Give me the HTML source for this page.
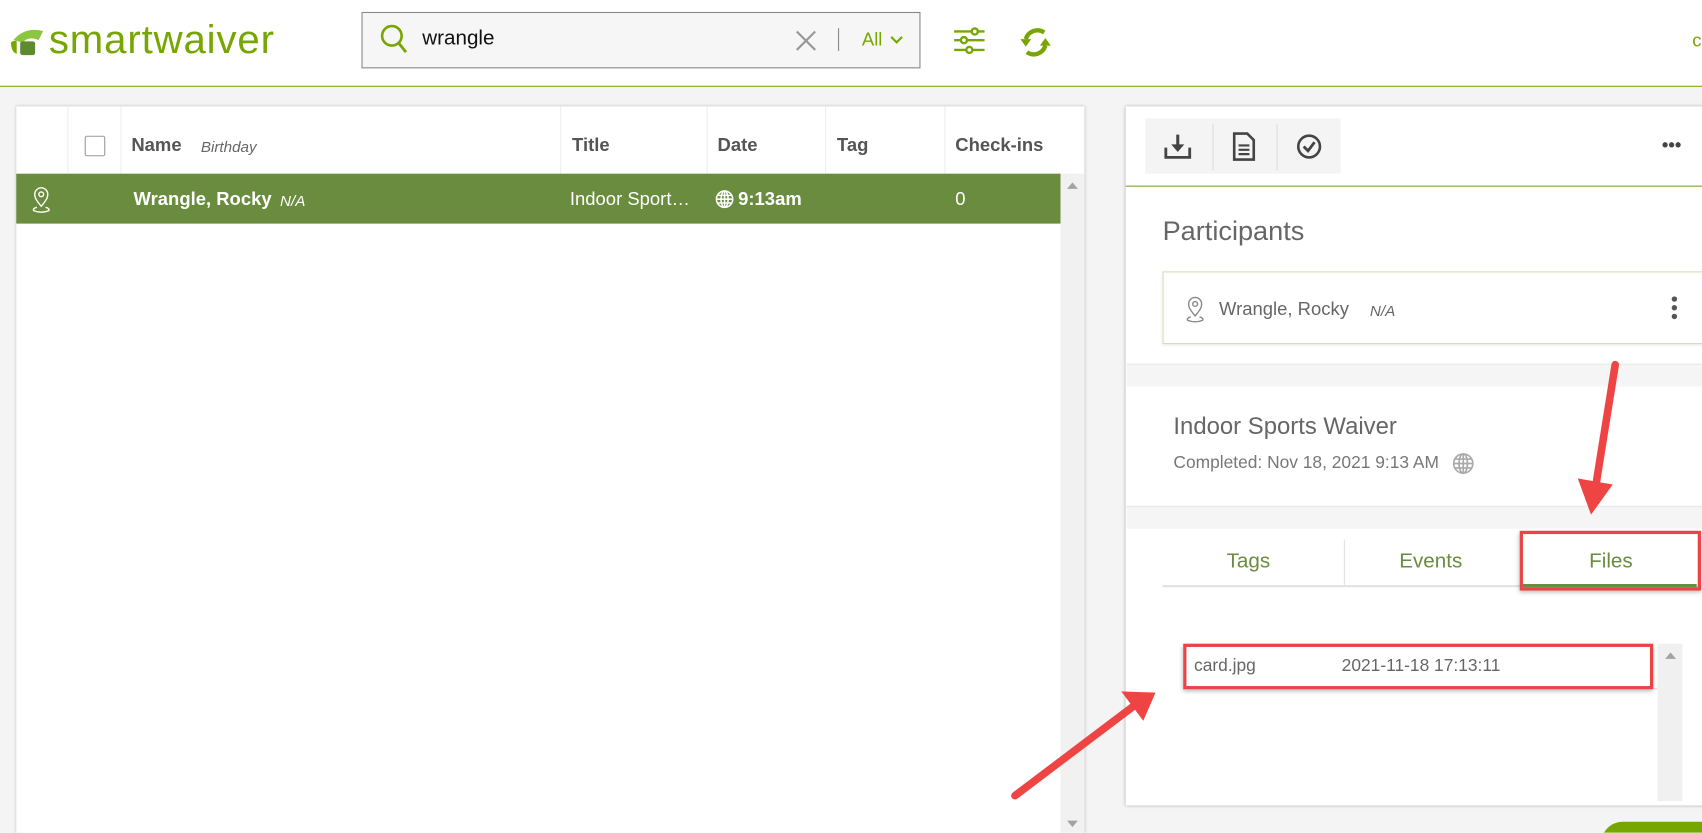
<!DOCTYPE html>
<html><head><meta charset="utf-8"><style>
html,body{margin:0;padding:0;width:1702px;height:832px;overflow:hidden;background:#f4f4f4;font-family:"Liberation Sans",sans-serif}
#s{position:absolute;left:0;top:0;width:1568px;height:767px;transform:scale(1.0855);transform-origin:0 0;background:#f4f4f4;overflow:hidden}
.a{position:absolute}
.hdr{left:0;top:0;width:1568px;height:79px;background:#fff;border-bottom:1px solid #7aa812}
.t{position:absolute;white-space:nowrap}
</style></head><body><div id="s">
<div class="a hdr"></div>
<!-- logo -->
<svg class="a" style="left:8px;top:22px" width="36" height="30" viewBox="0 0 34 28"><path d="M4 14 Q14 2 30 6 L26 14 Q18 10 12 16 Z" fill="#8cc63f"/><path d="M2 16 Q4 14 7 15 L7 26 Q2 24 2 16Z" fill="#77a600"/><rect x="10" y="15" width="13" height="12" rx="2" fill="#5d8a2f"/></svg>
<div class="t" style="left:45px;top:16px;font-size:37px;color:#77a600;letter-spacing:0.8px">smartwaiver</div>
<!-- search -->
<div class="a" style="left:333px;top:11px;width:513px;height:50px;background:#f6f6f6;border:1px solid #888"></div>
<svg class="a" style="left:348px;top:21px" width="32" height="32" viewBox="0 0 32 32"><circle cx="13" cy="12" r="9" fill="none" stroke="#77a600" stroke-width="2.4"/><line x1="19.5" y1="19" x2="26" y2="27" stroke="#77a600" stroke-width="2.6"/></svg>
<div class="t" style="left:389px;top:25px;font-size:19px;color:#111">wrangle</div>
<svg class="a" style="left:732px;top:27px" width="21" height="21"><path d="M2 2L19 19M19 2L2 19" stroke="#999" stroke-width="2"/></svg>
<div class="a" style="left:772px;top:26px;width:1px;height:21px;background:#888"></div>
<div class="t" style="left:794px;top:27px;font-size:17px;color:#77a600">All</div>
<svg class="a" style="left:820px;top:32px" width="12" height="10"><path d="M1 2L6 7L11 2" stroke="#77a600" stroke-width="2" fill="none"/></svg>
<svg class="a" style="left:878px;top:24px" width="30" height="28" viewBox="0 0 30 28"><g stroke="#77a600" stroke-width="2.2" fill="#fff"><line x1="1" y1="5" x2="29" y2="5"/><line x1="1" y1="13" x2="29" y2="13"/><line x1="1" y1="22" x2="29" y2="22"/><circle cx="20" cy="5" r="2.8"/><circle cx="10" cy="13" r="2.8"/><circle cx="15" cy="22" r="2.8"/></g></svg>
<svg class="a" style="left:937px;top:22px" width="34" height="34" viewBox="0 0 34 34"><path d="M25 8 A11 11 0 0 0 8 14" stroke="#77a600" stroke-width="4" fill="none"/><path d="M9 26 A11 11 0 0 0 26 20" stroke="#77a600" stroke-width="4" fill="none"/><path d="M3 14 L13 14 L8 21Z" fill="#77a600"/><path d="M21 20 L31 20 L26 13Z" fill="#77a600"/></svg>
<div class="t" style="left:1559px;top:28px;font-size:17px;color:#77a600">c</div>

<!-- left panel -->
<div class="a" style="left:15px;top:98px;width:984px;height:680px;background:#fff;box-shadow:0 0 3px rgba(0,0,0,.25)"></div>
<div class="a" style="left:62px;top:98px;width:1px;height:62px;background:#eee"></div>
<div class="a" style="left:111px;top:98px;width:1px;height:62px;background:#eee"></div>
<div class="a" style="left:516px;top:98px;width:1px;height:62px;background:#eee"></div>
<div class="a" style="left:651px;top:98px;width:1px;height:62px;background:#eee"></div>
<div class="a" style="left:760px;top:98px;width:1px;height:62px;background:#eee"></div>
<div class="a" style="left:870px;top:98px;width:1px;height:62px;background:#eee"></div>
<div class="a" style="left:78px;top:125px;width:17px;height:17px;border:1.5px solid #999;border-radius:2px"></div>
<div class="t" style="left:121px;top:124px;font-size:17px;font-weight:bold;color:#555">Name</div>
<div class="t" style="left:185px;top:127px;font-size:14px;font-style:italic;color:#666">Birthday</div>
<div class="t" style="left:527px;top:124px;font-size:17px;font-weight:bold;color:#555">Title</div>
<div class="t" style="left:661px;top:124px;font-size:17px;font-weight:bold;color:#555">Date</div>
<div class="t" style="left:771px;top:124px;font-size:17px;font-weight:bold;color:#555">Tag</div>
<div class="t" style="left:880px;top:124px;font-size:17px;font-weight:bold;color:#555">Check-ins</div>
<div class="a" style="left:15px;top:160px;width:962px;height:46px;background:#6a8c3f"></div>
<svg class="a" style="left:28px;top:171px" width="20" height="26" viewBox="0 0 20 26"><path d="M10 19 C4 12 4 10 4 8 A6 6 0 0 1 16 8 C16 10 16 12 10 19Z" fill="none" stroke="#fff" stroke-width="1.3"/><circle cx="10" cy="8" r="2.2" fill="none" stroke="#fff" stroke-width="1.3"/><path d="M6 20 Q2 21 3 23 Q10 26 17 23 Q18 21 14 20" fill="none" stroke="#fff" stroke-width="1.3"/></svg>
<div class="t" style="left:123px;top:174px;font-size:17px;font-weight:bold;color:#fff">Wrangle, Rocky</div>
<div class="t" style="left:258px;top:177px;font-size:14px;font-style:italic;color:#fff">N/A</div>
<div class="t" style="left:525px;top:174px;font-size:17px;color:#fff">Indoor Sport…</div>
<svg class="a" style="left:659px;top:175px" width="17" height="17" viewBox="0 0 17 17"><g fill="none" stroke="#fff" stroke-width="1.4"><circle cx="8.5" cy="8.5" r="7.5"/><ellipse cx="8.5" cy="8.5" rx="3.3" ry="7.5"/><line x1="1" y1="8.5" x2="16" y2="8.5"/><line x1="2" y1="5" x2="15" y2="5"/><line x1="2" y1="12" x2="15" y2="12"/><line x1="8.5" y1="1" x2="8.5" y2="16"/></g></svg>
<div class="t" style="left:680px;top:174px;font-size:17px;font-weight:bold;color:#fff">9:13am</div>
<div class="t" style="left:880px;top:174px;font-size:17px;color:#fff">0</div>
<div class="a" style="left:977px;top:160px;width:22px;height:610px;background:#f1f1f1"></div>
<svg class="a" style="left:982px;top:167px" width="12" height="8"><path d="M1 7L6 1L11 7Z" fill="#a3a3a3"/></svg>
<svg class="a" style="left:982px;top:755px" width="12" height="8"><path d="M1 1L6 7L11 1Z" fill="#a3a3a3"/></svg>

<!-- right panel -->
<div class="a" style="left:1037px;top:98px;width:540px;height:644px;background:#fff;box-shadow:0 0 3px rgba(0,0,0,.3)"></div>
<div class="a" style="left:1055px;top:109px;width:180px;height:51px;background:#f4f4f4"></div>
<div class="a" style="left:1117px;top:114px;width:1px;height:43px;background:#ddd"></div>
<div class="a" style="left:1176px;top:114px;width:1px;height:43px;background:#ddd"></div>
<svg class="a" style="left:1072px;top:122px" width="26" height="26" viewBox="0 0 26 26"><path d="M2 14 V23 H24 V14" fill="none" stroke="#444" stroke-width="2.6"/><line x1="13" y1="2" x2="13" y2="14" stroke="#444" stroke-width="2.8"/><path d="M7 11 L13 18 L19 11Z" fill="#444"/></svg>
<svg class="a" style="left:1135px;top:121px" width="22" height="28" viewBox="0 0 22 28"><path d="M2 2 H14 L20 8 V26 H2Z" fill="none" stroke="#444" stroke-width="2.4"/><path d="M6 13H16M6 17H16M6 21H16" stroke="#444" stroke-width="2"/></svg>
<svg class="a" style="left:1194px;top:123px" width="24" height="24" viewBox="0 0 24 24"><circle cx="12" cy="12" r="10" fill="none" stroke="#444" stroke-width="2.4"/><path d="M7 12 L11 16 L17 8" fill="none" stroke="#444" stroke-width="2.6"/></svg>
<div class="t" style="left:1531px;top:124px;font-size:17px;font-weight:bold;color:#444;letter-spacing:0px">•••</div>
<div class="a" style="left:1037px;top:171px;width:540px;height:1px;background:#77a33a"></div>
<div class="t" style="left:1071px;top:199px;font-size:25px;color:#666">Participants</div>
<div class="a" style="left:1071px;top:250px;width:510px;height:65px;border:1px solid #d5e0b5;box-shadow:0 1px 3px rgba(0,0,0,.1)"></div>
<svg class="a" style="left:1091px;top:272px" width="20" height="26" viewBox="0 0 20 26"><path d="M10 19 C4 12 4 10 4 8 A6 6 0 0 1 16 8 C16 10 16 12 10 19Z" fill="none" stroke="#888" stroke-width="1.3"/><circle cx="10" cy="8" r="2.2" fill="none" stroke="#888" stroke-width="1.3"/><path d="M6 20 Q2 21 3 23 Q10 26 17 23 Q18 21 14 20" fill="none" stroke="#888" stroke-width="1.3"/></svg>
<div class="t" style="left:1123px;top:275px;font-size:17px;color:#666">Wrangle, Rocky</div>
<div class="t" style="left:1262px;top:278px;font-size:14px;font-style:italic;color:#666">N/A</div>
<div class="a" style="left:1540px;top:273px;width:5px;height:5px;border-radius:50%;background:#555"></div>
<div class="a" style="left:1540px;top:281px;width:5px;height:5px;border-radius:50%;background:#555"></div>
<div class="a" style="left:1540px;top:289px;width:5px;height:5px;border-radius:50%;background:#555"></div>
<div class="a" style="left:1038px;top:335px;width:530px;height:20px;background:#f5f5f5;border-top:1px solid #e8e8e8"></div>
<div class="t" style="left:1081px;top:380px;font-size:22px;color:#666">Indoor Sports Waiver</div>
<div class="t" style="left:1081px;top:418px;font-size:16px;color:#777">Completed: Nov 18, 2021 9:13 AM</div>
<svg class="a" style="left:1338px;top:417px" width="20" height="20" viewBox="0 0 17 17"><g fill="none" stroke="#aaa" stroke-width="1.3"><circle cx="8.5" cy="8.5" r="7.5"/><ellipse cx="8.5" cy="8.5" rx="3.3" ry="7.5"/><line x1="1" y1="8.5" x2="16" y2="8.5"/><line x1="2" y1="5" x2="15" y2="5"/><line x1="2" y1="12" x2="15" y2="12"/><line x1="8.5" y1="1" x2="8.5" y2="16"/></g></svg>
<div class="a" style="left:1038px;top:466px;width:530px;height:20px;background:#f5f5f5;border-top:1px solid #e8e8e8"></div>
<div class="a" style="left:1071px;top:539px;width:497px;height:2px;background:#e2e2e2"></div>
<div class="a" style="left:1238px;top:497px;width:1px;height:42px;background:#e2e2e2"></div>
<div class="a" style="left:1403px;top:538px;width:160px;height:3px;background:#6a8c3f"></div>
<div class="t" style="left:1130px;top:507px;font-size:19px;color:#6a8c3f">Tags</div>
<div class="t" style="left:1289px;top:507px;font-size:19px;color:#6a8c3f">Events</div>
<div class="t" style="left:1464px;top:507px;font-size:19px;color:#6a8c3f">Files</div>
<div class="a" style="left:1400px;top:489px;width:161px;height:49px;border:3px solid #ec4346;box-shadow:0 2px 4px rgba(0,0,0,.3)"></div>
<div class="a" style="left:1527px;top:593px;width:23px;height:145px;background:#f0f0f0"></div>
<svg class="a" style="left:1533px;top:600px" width="12" height="8"><path d="M1 7L6 1L11 7Z" fill="#a3a3a3"/></svg>
<div class="a" style="left:1090px;top:634px;width:437px;height:1px;background:#ddd"></div>
<div class="t" style="left:1100px;top:605px;font-size:16px;color:#666">card.jpg</div>
<div class="t" style="left:1236px;top:605px;font-size:16px;color:#666">2021-11-18 17:13:11</div>
<div class="a" style="left:1090px;top:593px;width:427px;height:36px;border:3px solid #ec4346;box-shadow:0 2px 4px rgba(0,0,0,.3)"></div>
<div class="a" style="left:1475px;top:757px;width:140px;height:40px;border-radius:20px;background:#76a600"></div>
<!-- arrows -->
<svg class="a" style="left:0;top:0;overflow:visible" width="1568" height="767"><g fill="#ef4444" stroke="#ef4444" stroke-linecap="round"><line x1="1488" y1="336" x2="1470" y2="448" stroke-width="7"/><path d="M1455 442 L1484 447 L1466 472Z" stroke-width="2"/><line x1="935" y1="733" x2="1045" y2="650" stroke-width="7"/><path d="M1035 638 L1063 639 L1053 662Z" stroke-width="2"/></g></svg>
</div></body></html>
